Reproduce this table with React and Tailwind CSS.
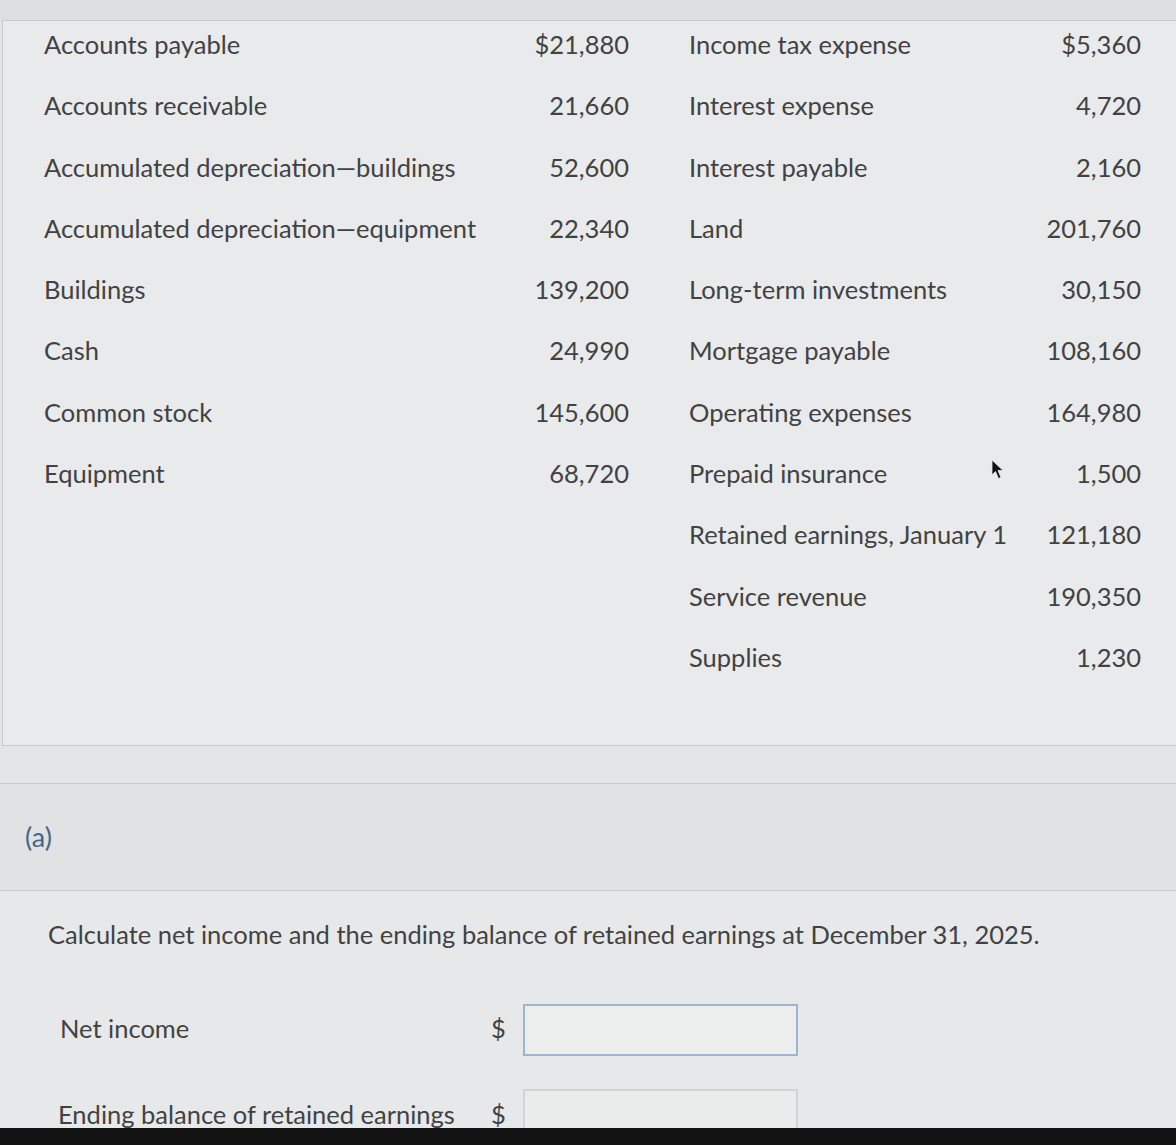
import React from 'react';

const leftRows = [
  ['Accounts payable', '$21,880'],
  ['Accounts receivable', '21,660'],
  ['Accumulated depreciation\u2014buildings', '52,600'],
  ['Accumulated depreciation\u2014equipment', '22,340'],
  ['Buildings', '139,200'],
  ['Cash', '24,990'],
  ['Common stock', '145,600'],
  ['Equipment', '68,720'],
];

const rightRows = [
  ['Income tax expense', '$5,360'],
  ['Interest expense', '4,720'],
  ['Interest payable', '2,160'],
  ['Land', '201,760'],
  ['Long-term investments', '30,150'],
  ['Mortgage payable', '108,160'],
  ['Operating expenses', '164,980'],
  ['Prepaid insurance', '1,500'],
  ['Retained earnings, January 1', '121,180'],
  ['Service revenue', '190,350'],
  ['Supplies', '1,230'],
];

function Row({ label, amount, labelW }) {
  return (
    <div className="flex h-[61.3px] items-start">
      <span className={`${labelW} leading-[30px] whitespace-nowrap`}>{label}</span>
      <span className="flex-1 text-right leading-[30px]">{amount}</span>
    </div>
  );
}

function Cursor() {
  return (
    <svg className="absolute left-[991px] top-[459px]" width="14" height="22" viewBox="0 0 14 22">
      <path d="M1 1 L1 16 L4.5 12.5 L7.5 19.5 L10 18.5 L7 11.5 L12 11.5 Z" fill="#111" stroke="#e8e8e8" strokeWidth="0.8" />
    </svg>
  );
}

export default function App() {
  return (
    <div
      className="relative h-[1145px] w-[1176px] overflow-hidden bg-[#e4e5e7] text-[#424242] text-[25.5px]"
      style={{ fontFamily: 'Lato, "Open Sans", sans-serif' }}
    >
      <div className="h-[20px] bg-[#dedfe1]" />
      <div className="relative ml-[2px] h-[726px] border-l border-t border-b border-[#c9cacc] bg-[#e9eaeb] pt-[8px]">
        <div className="flex">
          <div className="w-[626px] pl-[41px]">
            {leftRows.map(([l, a]) => (
              <Row key={l} label={l} amount={a} labelW="w-[440px]" />
            ))}
          </div>
          <div className="w-[512px] pl-[60px]">
            {rightRows.map(([l, a]) => (
              <Row key={l} label={l} amount={a} labelW="w-[340px]" />
            ))}
          </div>
        </div>
      </div>
      <Cursor />
      <div className="mt-[37px] flex h-[108px] items-center border-t border-b border-[#c8c9cb] bg-[#e1e2e3] pl-[25px]">
        <span className="text-[#456688] text-[27px]">(a)</span>
      </div>
      <div className="bg-[#e7e8e9] pl-[48px] pt-[28px]">
        <p className="leading-[30px]">Calculate net income and the ending balance of retained earnings at December 31, 2025.</p>
        <div className="mt-[55px] flex items-center">
          <span className="w-[443px] pl-[12px] pb-[4px]">Net income</span>
          <span className="w-[32px] pb-[4px]">$</span>
          <div className="h-[52px] w-[275px] border-2 border-[#9db6d0] bg-[#eceded]" />
        </div>
        <div className="mt-[33px] flex items-start">
          <span className="w-[443px] pl-[10px] pt-[6px]">Ending balance of retained earnings</span>
          <span className="w-[32px] pt-[6px]">$</span>
          <div className="h-[52px] w-[275px] border-2 border-[#d2d3d5] bg-[#eaebeb]" />
        </div>
      </div>
      <div className="absolute bottom-0 left-0 h-[17px] w-full bg-[#121212]" />
    </div>
  );
}
